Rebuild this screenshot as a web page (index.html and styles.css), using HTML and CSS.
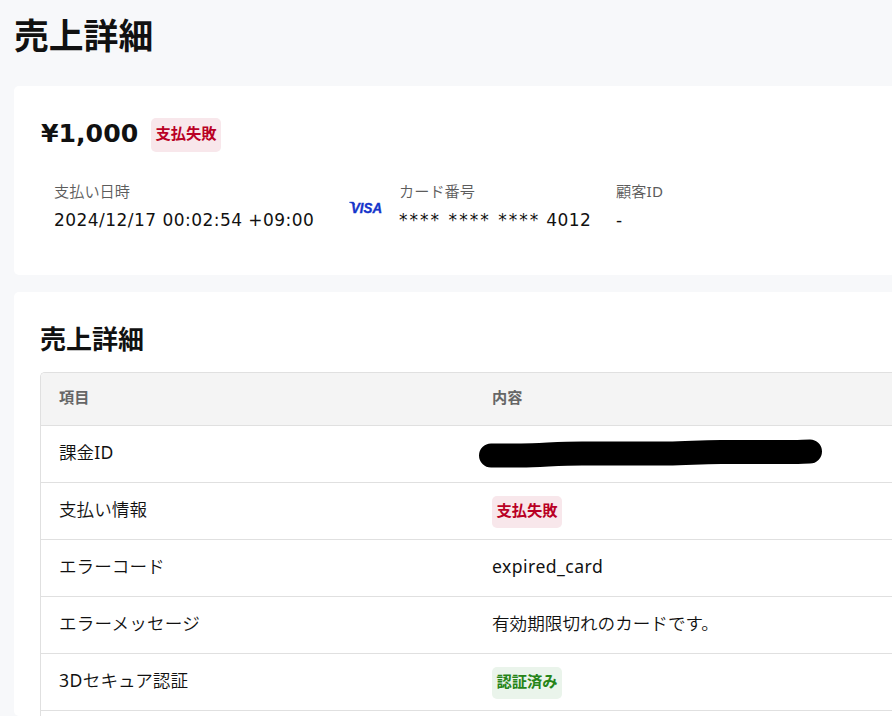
FILE: index.html
```html
<!DOCTYPE html>
<html lang="ja">

<head>
  <meta charset="UTF-8">
  <meta name="viewport" content="width=device-width, initial-scale=1.0">
  <title>売上詳細</title>
  <link rel="stylesheet" href="styles.css">
</head>

<body>
  <main class="page">
    <h1 class="page-title">売上詳細</h1>

    <section class="card summary">
      <div class="amount-row">
        <span class="amount">¥1,000</span>
        <span class="badge badge-error">支払失敗</span>
      </div>
      <div class="meta">
        <div class="meta-item meta-date">
          <span class="label">支払い日時</span>
          <span class="value">2024/12/17 00:02:54 +09:00</span>
        </div>
        <svg class="visa" viewBox="0 0 36 22" role="img" aria-label="VISA">
          <path d="M0.5 5 H4.5 L6 8 Q4 6 0.5 5.5 Z" />
          <text x="2" y="15.8" textLength="31" lengthAdjust="spacingAndGlyphs">VISA</text>
        </svg>
        <div class="meta-item meta-card">
          <span class="label">カード番号</span>
          <span class="value"><span class="mask">**** **** ****</span> 4012</span>
        </div>
        <div class="meta-item">
          <span class="label">顧客<span class="latin">ID</span></span>
          <span class="value">-</span>
        </div>
      </div>
    </section>

    <section class="card detail">
      <h2 class="section-title">売上詳細</h2>
      <div class="table">
        <div class="row head">
          <div class="cell">項目</div>
          <div class="cell">内容</div>
        </div>
        <div class="row">
          <div class="cell">課金<span class="latin">ID</span></div>
          <div class="cell">
            <svg class="redacted" viewBox="0 0 344 30">
              <path d="M12 17.5 H42 C62 17.5 78 15.5 103 15.5 H188 C210 15.5 218 14 242 14 H315 C321 14 326 13.5 331 13.5" />
            </svg>
          </div>
        </div>
        <div class="row">
          <div class="cell">支払い情報</div>
          <div class="cell"><span class="badge badge-error">支払失敗</span></div>
        </div>
        <div class="row">
          <div class="cell">エラーコード</div>
          <div class="cell"><span class="latin">expired_card</span></div>
        </div>
        <div class="row">
          <div class="cell kana">エラーメッセージ</div>
          <div class="cell">有効期限切れのカードです。</div>
        </div>
        <div class="row">
          <div class="cell"><span class="latin">3D</span>セキュア認証</div>
          <div class="cell"><span class="badge badge-success">認証済み</span></div>
        </div>
      </div>
    </section>
  </main>
</body>

</html>
```

FILE: styles.css
```css
* {
  box-sizing: border-box;
}

body {
  margin: 0;
  height: 100vh;
  overflow: hidden;
  background-color: #f7f8fa;
  color: #111;
  font-family: "Noto Sans", "Noto Sans CJK JP", sans-serif;
  font-size: 17.6px;
}

.page {
  display: flex;
  flex-direction: column;
  height: 100vh;
  padding-left: 14px;
}

.page-title {
  margin: 0;
  height: 86px;
  padding-top: 10px;
  font-size: 34.8px;
  line-height: 52px;
}

.card {
  background-color: #fff;
  border-radius: 5px 0 0 5px;
  padding-left: 26px;
}

.summary {
  height: 189px;
  margin-bottom: 17px;
  padding-top: 32px;
}

.amount-row {
  display: flex;
  align-items: center;
  gap: 13px;
  height: 34px;
}

.amount {
  width: 98px;
  padding-left: 1px;
  font-family: "DejaVu Sans", sans-serif;
  font-size: 25.2px;
  font-weight: bold;
  line-height: 30px;
  padding-bottom: 2px;
  white-space: nowrap;
}

.badge {
  display: block;
  width: 70px;
  height: 32px;
  border-radius: 5px;
  font-size: 15.3px;
  font-weight: bold;
  line-height: 29px;
  text-align: center;
  white-space: nowrap;
}

.amount-row .badge {
  height: 34px;
  line-height: 31px;
}

.badge-error {
  background-color: #f8e7eb;
  color: #b90025;
}

.badge-success {
  background-color: #eaf4eb;
  color: #268418;
}

.meta {
  display: flex;
  padding: 28px 0 0 14px;
}

.meta-item {
  display: flex;
  flex-direction: column;
  white-space: nowrap;
}

.meta-date {
  width: 295px;
}

.meta-card {
  width: 217px;
}

.label {
  color: #5c5c5c;
  font-size: 15.2px;
  font-weight: 350;
  line-height: 22px;
}

.value {
  margin-top: 4px;
  font-family: "DejaVu Sans", sans-serif;
  font-size: 17px;
  letter-spacing: 0.46px;
  line-height: 28px;
}

.mask {
  letter-spacing: 2.04px;
}

.latin {
  font-weight: 400;
  letter-spacing: 0.45px;
}

.visa {
  width: 36px;
  height: 22px;
  margin: 17px 14px 0 0;
  fill: #1434cb;
  stroke: #1434cb;
  stroke-width: 0.4px;
  font-family: "Liberation Sans", sans-serif;
  font-size: 15px;
  font-style: italic;
  font-weight: bold;
}

.detail {
  flex: 1;
  min-height: 0;
  padding-top: 28px;
}

.section-title {
  margin: 0;
  height: 52px;
  font-size: 26px;
  line-height: 38px;
}

.table {
  height: 344px;
  border: 1px solid #e0e0e0;
  border-width: 1px 0 0 1px;
  border-radius: 5px 0 0 0;
  overflow: hidden;
}

.row {
  display: grid;
  grid-template-columns: 433px 1fr;
  align-items: center;
  height: 57px;
  padding-left: 18px;
  border-bottom: 1px solid #e0e0e0;
}

.cell {
  font-weight: 350;
  line-height: 28px;
  padding-bottom: 4px;
}

.kana {
  letter-spacing: 0.15px;
}

.cell .badge {
  margin-top: 5px;
}

.head {
  height: 53px;
  background-color: #f4f4f4;
  color: #666;
  font-size: 15.2px;
}

.head .cell {
  padding-bottom: 5px;
  font-weight: bold;
}

.redacted {
  display: block;
  width: 344px;
  height: 30px;
  margin: 2px 0 0 -13px;
}

.redacted path {
  fill: none;
  stroke: #000;
  stroke-width: 24;
  stroke-linecap: round;
}
```
